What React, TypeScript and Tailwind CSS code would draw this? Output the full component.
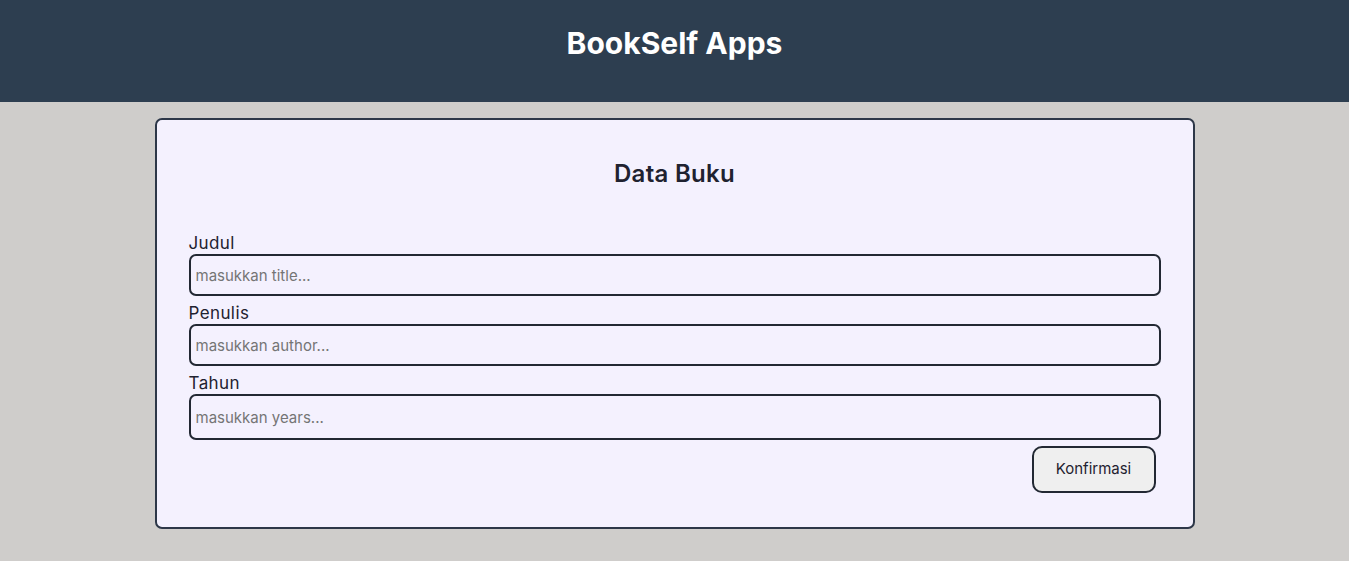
export default function App() {
  return (
    <div className="min-h-[561px] bg-[#cfcdcb] font-['Inter','Open_Sans',sans-serif]">
      <header className="flex h-[102px] items-start justify-center bg-[#2d3e50] pt-[21px]">
        <h1 className="text-[30px] font-bold text-white">BookSelf Apps</h1>
      </header>
      <main className="flex justify-center pt-[16px] pb-[32px]">
        <div className="w-[1040px] rounded-[7px] border-2 border-[#2d3748] bg-[#f4f1fe] px-[32px] pt-[36px] pb-[34px]">
          <h2 className="text-center text-[24px] font-semibold tracking-[0.3px] text-[#1f2230]">Data Buku</h2>
          <form className="mt-[40px] flex flex-col" onSubmit={(e) => e.preventDefault()}>
            <label className="text-[17px] leading-[22px] tracking-[0.4px] text-[#1f2230]">Judul</label>
            <input
              placeholder="masukkan title..."
              className="h-[42px] rounded-[7px] border-2 border-[#222833] bg-transparent px-[5px] text-[15px] text-[#1f2230] placeholder:text-[#757575] outline-none"
            />
            <label className="mt-[6px] text-[17px] leading-[22px] tracking-[0.4px] text-[#1f2230]">Penulis</label>
            <input
              placeholder="masukkan author..."
              className="h-[42px] rounded-[7px] border-2 border-[#222833] bg-transparent px-[5px] text-[15px] text-[#1f2230] placeholder:text-[#757575] outline-none"
            />
            <label className="mt-[6px] text-[17px] leading-[22px] tracking-[0.4px] text-[#1f2230]">Tahun</label>
            <input
              placeholder="masukkan years..."
              className="h-[46px] rounded-[7px] border-2 border-[#222833] bg-transparent px-[5px] text-[15px] text-[#1f2230] placeholder:text-[#757575] outline-none"
            />
            <div className="mt-[6px] flex justify-end pr-[5px]">
              <button
                type="submit"
                className="h-[47px] w-[124px] rounded-[10px] border-2 border-[#222833] bg-[#efefef] text-[15px] text-[#1f2230]"
              >
                Konfirmasi
              </button>
            </div>
          </form>
        </div>
      </main>
    </div>
  )
}
